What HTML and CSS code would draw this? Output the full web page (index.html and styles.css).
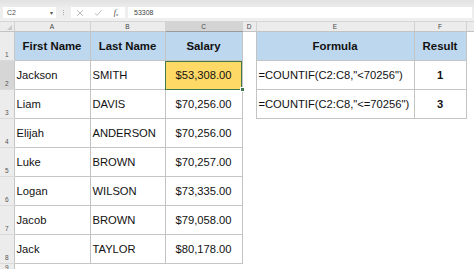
FILE: index.html
```html
<!DOCTYPE html>
<html lang="en">
<head>
<meta charset="utf-8">
<title>COUNTIF less than</title>
<link rel="stylesheet" href="styles.css">
</head>
<body>
<div class="fbar">
  <div class="namebox"><span>C2</span><span class="dd">&#9662;</span></div>
  <div class="sep"><span></span><span></span><span></span></div>
  <div class="btns">
    <svg class="ic" viewBox="0 0 8 8" width="8" height="8"><path d="M1 1L7 7M7 1L1 7" stroke="#bdbdbd" stroke-width="1" fill="none"/></svg>
    <svg class="ic" viewBox="0 0 8 8" width="8" height="8"><path d="M0.8 4.2L3 6.4L7.4 1.4" stroke="#bdbdbd" stroke-width="1" fill="none"/></svg>
    <span class="fx"><i>f</i><sub>x</sub></span>
  </div>
  <div class="formula">53308</div>
</div>
<table class="sheet">
  <colgroup>
    <col class="w-rh"><col class="w-a"><col class="w-b"><col class="w-c"><col class="w-d"><col class="w-e"><col class="w-f"><col class="w-g">
  </colgroup>
  <thead>
    <tr class="colhead">
      <th class="corner"><span class="tri"></span></th>
      <th>A</th><th>B</th><th class="selcol">C</th><th>D</th><th>E</th><th>F</th><th class="last"></th>
    </tr>
  </thead>
  <tbody>
    <tr class="r">
      <th class="rn">1</th>
      <td class="b hd">First Name</td><td class="b hd">Last Name</td><td class="b hd">Salary</td>
      <td></td>
      <td class="b hd">Formula</td><td class="b hd">Result</td><td></td>
    </tr>
    <tr class="r">
      <th class="rn selrow">2</th>
      <td class="b l">Jackson</td><td class="b l">SMITH</td><td class="b c active">$53,308.00</td>
      <td></td>
      <td class="b l">=COUNTIF(C2:C8,"&lt;70256")</td><td class="b c bold">1</td><td></td>
    </tr>
    <tr class="r">
      <th class="rn">3</th>
      <td class="b l">Liam</td><td class="b l">DAVIS</td><td class="b c">$70,256.00</td>
      <td></td>
      <td class="b l">=COUNTIF(C2:C8,"&lt;=70256")</td><td class="b c bold">3</td><td></td>
    </tr>
    <tr class="r">
      <th class="rn">4</th>
      <td class="b l">Elijah</td><td class="b l">ANDERSON</td><td class="b c">$70,256.00</td>
      <td></td><td></td><td></td><td></td>
    </tr>
    <tr class="r">
      <th class="rn">5</th>
      <td class="b l">Luke</td><td class="b l">BROWN</td><td class="b c">$70,257.00</td>
      <td></td><td></td><td></td><td></td>
    </tr>
    <tr class="r">
      <th class="rn">6</th>
      <td class="b l">Logan</td><td class="b l">WILSON</td><td class="b c">$73,335.00</td>
      <td></td><td></td><td></td><td></td>
    </tr>
    <tr class="r">
      <th class="rn">7</th>
      <td class="b l">Jacob</td><td class="b l">BROWN</td><td class="b c">$79,058.00</td>
      <td></td><td></td><td></td><td></td>
    </tr>
    <tr class="r">
      <th class="rn">8</th>
      <td class="b l">Jack</td><td class="b l">TAYLOR</td><td class="b c">$80,178.00</td>
      <td></td><td></td><td></td><td></td>
    </tr>
    <tr class="r9">
      <th class="rn">9</th>
      <td></td><td></td><td></td><td></td><td></td><td></td><td></td>
    </tr>
  </tbody>
</table>
</body>
</html>
```

FILE: styles.css
```css
html, body {
  margin: 0;
  padding: 0;
}
body {
  width: 474px;
  height: 269px;
  overflow: hidden;
  background: #ffffff;
  font-family: "Liberation Sans", Arial, sans-serif;
  color: #111;
}

/* formula bar */
.fbar {
  display: flex;
  align-items: flex-start;
  height: 21px;
  box-sizing: border-box;
  padding: 7px 2px 0 3px;
  background: linear-gradient(#e2e2e2, #eeeeee 40%, #efefef);
}
.namebox {
  width: 53px;
  height: 11px;
  box-sizing: border-box;
  background: #fff;
  display: flex;
  align-items: center;
  justify-content: space-between;
  padding: 0 3px 0 4px;
  font-size: 7px;
  color: #555;
}
.namebox .dd {
  font-size: 6px;
  color: #555;
}
.sep {
  width: 15px;
  height: 11px;
  display: flex;
  flex-direction: column;
  align-items: center;
  justify-content: center;
  gap: 1px;
}
.sep span {
  width: 1px;
  height: 1px;
  background: #aaa;
}
.btns {
  width: 54px;
  height: 11px;
  background: #fff;
  display: grid;
  grid-template-columns: repeat(3, 1fr);
  align-items: center;
  justify-items: center;
}
.fx {
  font-family: "Liberation Serif", serif;
  font-size: 8px;
  color: #444;
  line-height: 1;
}
.fx sub {
  font-size: 5px;
  font-style: italic;
  vertical-align: -1px;
}
.formula {
  flex: 1;
  height: 11px;
  margin-left: 3px;
  background: #fff;
  font-size: 7px;
  line-height: 11px;
  padding-left: 6px;
  color: #444;
}

/* sheet */
.sheet {
  border-collapse: collapse;
  table-layout: fixed;
  width: 474px;
  font-size: 11.2px;
}
.w-rh { width: 14px; }
.w-a { width: 76px; }
.w-b { width: 75px; }
.w-c { width: 77px; }
.w-d { width: 14px; }
.w-e { width: 158px; }
.w-f { width: 52px; }
.w-g { width: 8px; }

.colhead th {
  height: 9px;
  padding: 0;
  background: #ececec;
  border-top: 1px solid #d6d6d6;
  border-right: 1px solid #d2d2d2;
  border-bottom: 1px solid #c3c3c3;
  font-size: 6.5px;
  font-weight: normal;
  color: #444;
  line-height: 9px;
  text-align: center;
}
.colhead th.selcol {
  background: #d4d4d4;
  border-bottom: 1px solid #9a9a9a;
}
.colhead th.last {
  border-right: none;
}
.corner {
  position: relative;
}
.tri {
  position: absolute;
  right: 2px;
  bottom: 1px;
  width: 0;
  height: 0;
  border-left: 5px solid transparent;
  border-bottom: 5px solid #c8c8c8;
}

.r {
  height: 29px;
}
.r9 {
  height: 9px;
}
th.rn {
  padding: 0 0 2px 0;
  background: #ececec;
  border-right: 1px solid #c6c6c6;
  border-bottom: 1px solid #dadada;
  vertical-align: bottom;
  font-size: 6.5px;
  font-weight: normal;
  color: #555;
  line-height: 1;
  text-align: center;
}
.r9 th.rn {
  padding: 1px 0 0 0;
  vertical-align: top;
}
th.rn.selrow {
  background: #d6d6d6;
}

td {
  padding: 0;
  white-space: nowrap;
  overflow: hidden;
}
td.b {
  border: 1px solid #c4c4c4;
  color: #111;
}
td.hd {
  background: #bdd7ee;
  font-weight: bold;
  text-align: center;
  font-size: 11.4px;
}
td.l {
  text-align: left;
  padding-left: 2px;
}
td.c {
  text-align: center;
}
td.bold {
  font-weight: bold;
}
td.active {
  background: #ffd966;
  outline: 1.5px solid #3f7a4e;
  outline-offset: -1.5px;
  position: relative;
  overflow: visible;
}
td.active::after {
  content: "";
  position: absolute;
  right: -3px;
  bottom: -3px;
  width: 3px;
  height: 3px;
  background: #3f7a4e;
  border: 1px solid #fff;
}
```
